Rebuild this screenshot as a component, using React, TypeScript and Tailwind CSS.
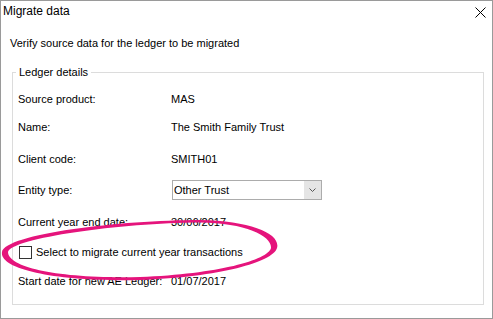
import React from "react";

function Row({ className = "", label, children }: { className?: string; label: string; children: React.ReactNode }) {
  return (
    <div className={`grid grid-cols-[153px_1fr] items-center pl-[5px] ${className}`}>
      <span>{label}</span>
      <div className="flex items-center">{children}</div>
    </div>
  );
}

export default function App() {
  return (
    <div className="relative w-[493px] h-[319px] border border-[#9a9a9a] bg-white flex flex-col font-['Liberation_Sans',Arial,sans-serif] text-[11px] leading-[16px] text-black">
      <div className="h-[20px] flex items-center justify-between pl-[2px] pr-[6px] text-[12px]">
        <span>Migrate data</span>
        <svg width="11" height="11" viewBox="0 0 11 11" className="mt-[2px]">
          <path d="M0.5 0.5 L10.5 10.5 M10.5 0.5 L0.5 10.5" stroke="#000" strokeWidth="1" fill="none" />
        </svg>
      </div>
      <div className="mt-[14px] h-[16px] pl-[9px]">Verify source data for the ledger to be migrated</div>
      <fieldset className="mt-[13px] ml-[11px] mr-[8px] h-[241px] border border-[#dcdcdc] flex flex-col">
        <legend className="ml-[3px] px-[3px] leading-[16px]">Ledger details</legend>
        <Row className="mt-[11px] h-[16px]" label="Source product:">MAS</Row>
        <Row className="mt-[12px] h-[16px]" label="Name:">The Smith Family Trust</Row>
        <Row className="mt-[16px] h-[16px]" label="Client code:">SMITH01</Row>
        <Row className="mt-[13px] h-[20px]" label="Entity type:">
          <div className="ml-[1px] w-[150px] h-[20px] border border-[#acacac] flex items-stretch bg-white">
            <span className="flex-1 pl-[1px] flex items-center">Other Trust</span>
            <span className="w-[17px] bg-[#e5e5e5] flex items-center justify-center">
              <svg width="7" height="4" viewBox="0 0 7 4">
                <path d="M0.5 0.5 L3.5 3.5 L6.5 0.5" stroke="#555" strokeWidth="1" fill="none" />
              </svg>
            </span>
          </div>
        </Row>
        <Row className="mt-[14px] h-[16px]" label="Current year end date:">30/06/2017</Row>
        <div className="mt-[14px] h-[16px] pl-[6px] flex items-center gap-[4px]">
          <span className="w-[13px] h-[13px] border border-[#333] bg-white" />
          <span>Select to migrate current year transactions</span>
        </div>
        <Row className="mt-[13px] h-[16px]" label="Start date for new AE Ledger:">01/07/2017</Row>
      </fieldset>
      <svg
        className="absolute top-[-1px] left-[-1px] pointer-events-none"
        width="493"
        height="319"
        viewBox="0 0 493 319"
      >
        <path
          fillRule="evenodd"
          fill="#e5147c"
          d="M2 252 C5 234 120 220 200 220 C252 221 281 234 277 248 C273 262 220 277 140 280 C60 282 -1 270 2 252 Z
             M8 252 C12 238 120 223 200 222.5 C246 223 272 236 271 248 C268 260 218 274 140 277 C62 279 8 268 8 252 Z"
        />
      </svg>
    </div>
  );
}
